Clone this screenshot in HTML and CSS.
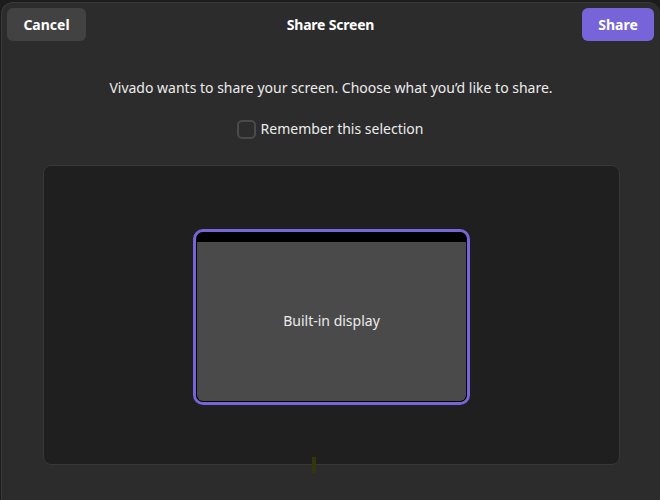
FILE: index.html
```html
<!DOCTYPE html>
<html>
<head>
<meta charset="utf-8">
<link rel="stylesheet" href="styles.css">
</head>
<body>
<div class="window">
  <header class="header">
    <div class="left"><button class="btn btn-cancel">Cancel</button></div>
    <div class="title">Share Screen</div>
    <div class="right"><button class="btn btn-share">Share</button></div>
  </header>
  <p class="message">Vivado wants to share your screen. Choose what you’d like to share.</p>
  <label class="remember"><span class="check"></span>Remember this selection</label>
  <div class="panel">
    <div class="monitor">
      <div class="monitor-inner">
        <div class="monitor-bar"></div>
        <div class="monitor-screen">Built-in display</div>
      </div>
    </div>
    <div class="mark"></div>
  </div>
</div>
</body>
</html>
```
FILE: styles.css
```css
html, body {
  margin: 0;
  padding: 0;
  background: #1c1c1c;
  width: 660px;
  height: 500px;
  overflow: hidden;
}
body {
  font-family: "Noto Sans", "DejaVu Sans", sans-serif;
  color: #ffffff;
}
.window {
  box-sizing: border-box;
  margin-top: 2px;
  margin-left: 1px;
  width: 659px;
  height: 498px;
  background: #2c2c2c;
  border-top: 1px solid #3a3a3a;
  border-left: 1px solid #3a3a3a;
  border-radius: 12px 12px 0 0;
  position: relative;
}
.header {
  display: grid;
  grid-template-columns: 1fr auto 1fr;
  align-items: center;
  padding: 5px 6px 0 5px;
  height: 33px;
}
.left {
  display: flex;
  justify-content: flex-start;
}
.right {
  display: flex;
  justify-content: flex-end;
}
.btn {
  font-family: inherit;
  font-size: 14px;
  font-weight: 700;
  color: #ffffff;
  border: none;
  border-radius: 6px;
  height: 33px;
  padding: 0;
}
.btn-cancel {
  background: #424242;
  width: 79px;
}
.btn-share {
  background: #7764d8;
  width: 72px;
}
.title {
  font-size: 14px;
  font-weight: 700;
  letter-spacing: -0.2px;
}
.message {
  margin: 37px 0 0 0;
  text-align: center;
  font-size: 14px;
  line-height: 20px;
  color: #ececec;
}
.remember {
  display: flex;
  align-items: center;
  justify-content: center;
  margin-top: 21px;
  font-size: 14px;
  line-height: 20px;
  color: #ececec;
  margin-left: -2px;
}
.check {
  box-sizing: border-box;
  width: 19px;
  height: 19px;
  border: 2px solid #4a4a4a;
  border-radius: 5px;
  margin-right: 5px;
}
.panel {
  box-sizing: border-box;
  margin: 26px 0 0 41px;
  width: 577px;
  height: 300px;
  background: #1f1f1f;
  border: 1px solid #383838;
  border-radius: 8px;
  display: flex;
  align-items: center;
  justify-content: center;
  position: relative;
}
.monitor {
  box-sizing: border-box;
  width: 277px;
  height: 176px;
  border: 3px solid #7764d8;
  border-radius: 10px;
  margin-top: 4px;
  overflow: hidden;
}
.monitor-inner {
  height: 100%;
  background: #000000;
  border-radius: 7px;
  display: flex;
  flex-direction: column;
  padding: 0 1px 1px 1px;
  box-sizing: border-box;
}
.monitor-bar {
  height: 10px;
  flex: none;
}
.monitor-screen {
  flex: 1;
  background: #4a4a4a;
  border-radius: 0 0 6px 6px;
  display: flex;
  align-items: center;
  justify-content: center;
  font-size: 14px;
  color: #ececec;
  padding-bottom: 3px;
}
.mark {
  position: absolute;
  left: 268px;
  top: 291px;
  width: 4px;
  height: 16px;
  background: #35350e;
}
```
